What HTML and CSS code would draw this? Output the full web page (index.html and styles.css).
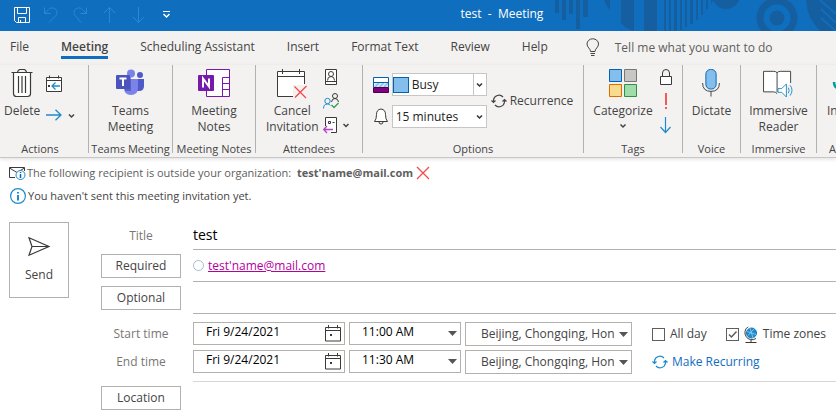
FILE: index.html
```html
<!DOCTYPE html>
<html lang="en">
<head>
    <meta charset="UTF-8">
    <meta name="viewport" content="width=device-width, initial-scale=1.0">
    <title>test - Meeting</title>
    <link rel="stylesheet" href="styles.css">
</head>
<body>
    <header class="titlebar">
        <div class="quick-access">
            <button class="icon-btn" aria-label="Save">
                <svg width="16" height="16" viewBox="0 0 16 16" fill="none" stroke="#fff"><path d="M.5.5h15v15h-13l-2-2zM3.500.5v6h9v-6M4.500 15.500v-5h7v5M6.500 13v2"/></svg>
            </button>
            <button class="icon-btn faded" aria-label="Undo">
                <svg width="16" height="16" viewBox="0 0 16 16" fill="none" stroke="#2b88d8"><path d="M1.500.5v6h6M1.500 6.500l4-4C8-.5 14 1 14 5.500c0 2-1 3-2 4l-6 6"/></svg>
            </button>
            <button class="icon-btn faded" aria-label="Redo">
                <svg width="16" height="16" viewBox="0 0 16 16" fill="none" stroke="#2b88d8"><path d="M14.500.5v6h-6M14.500 6.500l-4-4C8-.5 2 1 2 5.500c0 2 1 3 2 4l5 6"/></svg>
            </button>
            <button class="icon-btn faded" aria-label="Previous item">
                <svg width="16" height="16" viewBox="0 0 16 16" fill="none" stroke="#2b88d8"><path d="M8.500 16V.5M3 6l5.500-5.500L14 6"/></svg>
            </button>
            <button class="icon-btn faded" aria-label="Next item">
                <svg width="16" height="16" viewBox="0 0 16 16" fill="none" stroke="#2b88d8"><path d="M8.500 0v15.500M3 10l5.500 5.500L14 10"/></svg>
            </button>
            <button class="icon-btn" aria-label="Customize toolbar">
                <svg width="16" height="16" viewBox="0 0 16 16" fill="none" stroke="#fff"><path d="M4 4.500h7"/><path d="M4.500 7l3 3 3-3" stroke-width="1.500"/></svg>
            </button>
        </div>
        <svg class="pattern" width="281" height="31" viewBox="0 0 281 31" fill="#155fa0">
            <path d="M0 0h4v13H0zM7 0h4v20H7zM14 0h4v14h-4zM21 0h4v29h-4zM28 0h5v17h-5zM49 0h6v10q-4-4-6-10zM66 0h13v31q-8-2-13-8zM89 0h13v31H89zM109 0h2v31h-2zM114 0h2v31h-2zM119 0h3v31h-3zM125 0h2v30h-2zM130 0h2v27h-2zM135 0h3v24h-3zM141 0h2v20h-2zM146 0h2v15h-2zM151 0h2v9h-2zM156 0h3l-3 4z"/>
            <circle cx="171" cy="-5" r="14"/>
            <circle cx="222" cy="18" r="20.500"/>
            <circle cx="222" cy="18" r="13.500" fill="#106ebe"/>
            <circle cx="222" cy="18" r="7.500"/>
            <path d="M251 0h30v31h-16Q252 18 251 0z"/>
            <path d="M265 0l16 14M266 9l15 14M266 18l15 13" stroke="#106ebe" stroke-width="2" fill="none"/>
        </svg>
        <h1 class="window-title">test&nbsp; -&nbsp; Meeting</h1>
    </header>

    <nav class="tabs">
        <a class="tab" href="#">File</a>
        <a class="tab active" href="#">Meeting</a>
        <a class="tab" href="#">Scheduling Assistant</a>
        <a class="tab" href="#">Insert</a>
        <a class="tab" href="#">Format Text</a>
        <a class="tab" href="#">Review</a>
        <a class="tab" href="#">Help</a>
        <button class="tell-me">
            <svg width="14" height="18" viewBox="0 0 14 18" fill="none" stroke="#444"><path d="M4.500 12.500c0-3-3.500-4-3.500-7.500a5.500 5 0 0 1 11.500 0c0 3.500-3.500 4.500-3.500 7.500zM4.500 14.500H9M5 16.500h3.500"/></svg>
            Tell me what you want to do
        </button>
    </nav>

    <div class="ribbon">
        <section class="group actions">
            <div class="group-body">
                <button class="big-btn">
                    <svg width="28" height="28" viewBox="0 0 28 28" fill="none" stroke="#3b3a39" stroke-width="1.200"><path d="M5.500 3.500h17v21q0 3-3 3h-11q-3 0-3-3z" fill="#fff"/><path d="M3.500 3.500h21M9.500 3.500Q10 .5 12 .5h4q2 0 2.500 3M10.500 7v17M14 7v17M17.500 7v17"/></svg>
                    <span>Delete</span>
                </button>
                <div class="stack">
                    <button class="icon-btn" aria-label="Calendar">
                        <svg width="16" height="18" viewBox="0 0 16 18" fill="none" stroke="#3b3a39"><path d="M.5 2.500h15v14H.5z" fill="#fff"/><path d="M.5 5.500h15M3.500.5v3M12.500.5v3"/><path d="M2 10h2v2H2z" fill="#3b3a39" stroke="none"/><path d="M14 11H6M9.500 7.500L6 11l3.500 3.500" stroke="#1e8bcd" stroke-width="1.300"/></svg>
                    </button>
                    <button class="icon-btn" aria-label="Forward">
                        <svg width="28" height="12" viewBox="0 0 28 12" fill="none" stroke="#1e8bcd" stroke-width="1.300"><path d="M0 6h15M9.500.7L15 6l-5.500 5.300"/><path d="M23 5.500l2.500 2.500L28 5.500" stroke="#444" stroke-width="1.500"/></svg>
                    </button>
                </div>
            </div>
            <h2>Actions</h2>
        </section>

        <section class="group teams">
            <div class="group-body">
                <button class="big-btn">
                    <svg width="28" height="28" viewBox="0 0 28 28"><circle cx="15" cy="4.500" r="4" fill="#7b83eb"/><circle cx="24" cy="6" r="3" fill="#5059c9"/><path d="M20 10h8v7q0 5-5 5h-3z" fill="#5059c9"/><path d="M8 10h14v9q0 7-7 7t-7-7z" fill="#7b83eb"/><path d="M9 8h6v14H9z" fill="#3940a0" opacity=".5"/><rect y="6" width="14" height="14" rx="1" fill="#4b53bc"/><path d="M3.500 9.500h7M7 9.500V17" stroke="#fff" stroke-width="2"/></svg>
                    <span>Teams<br>Meeting</span>
                </button>
            </div>
            <h2>Teams Meeting</h2>
        </section>

        <section class="group notes">
            <div class="group-body">
                <button class="big-btn">
                    <svg width="32" height="28" viewBox="0 0 32 28" fill="none" stroke="#7719aa"><path d="M8.500.5h23v27h-23z" fill="#fff"/><path d="M24.500 27.500v-19h7M24.500 14.500h7M24.500 20.500h7"/><rect y="6" width="16" height="16" rx="1" fill="#7719aa" stroke="none"/><path d="M5 18.500v-9l6 8v-8" stroke="#fff" stroke-width="2"/></svg>
                    <span>Meeting<br>Notes</span>
                </button>
            </div>
            <h2>Meeting Notes</h2>
        </section>

        <section class="group attendees">
            <div class="group-body">
                <button class="big-btn">
                    <svg width="30" height="28" viewBox="0 0 30 28" fill="none" stroke="#3b3a39"><path d="M.5 2.500h27v25H.5z" fill="#fff" stroke="none"/><path d="M27.500 15V2.500H.5v25H16M.5 7.500h27M5.500 0v5M22.500 0v5"/><path d="M16 16h14v12H16z" fill="#f3f2f1" stroke="none"/><path d="M17.500 17.500L29 29M29.500 17L18 28.500" stroke="#f04a4a" stroke-width="1.300"/></svg>
                    <span>Cancel<br>Invitation</span>
                </button>
                <div class="stack">
                    <button class="icon-btn" aria-label="Address book">
                        <svg width="16" height="16" viewBox="0 0 16 16" fill="none" stroke="#3b3a39"><path d="M2.500.5h11v15h-11z" fill="#fff"/><path d="M2.500 12.500h11"/><circle cx="8" cy="5" r="2.500"/><path d="M4.500 11.500q0-4 3.500-4t3.500 4"/></svg>
                    </button>
                    <button class="icon-btn" aria-label="Check names">
                        <svg width="16" height="16" viewBox="0 0 16 16" fill="none" stroke="#3b3a39"><circle cx="12" cy="3" r="2.500"/><path d="M8.500 9q.5-3.500 3.500-3.500t3.500 3.500"/><circle cx="4.500" cy="8" r="2.700" stroke="#1e8bcd"/><path d="M.5 15.500q0-4.500 4-4.500 2 0 3 1.500" stroke="#1e8bcd"/><path d="M8.500 12l2.500 2.500 4.500-4.500" stroke="#30a04c" stroke-width="1.300"/></svg>
                    </button>
                    <button class="icon-btn" aria-label="Response options">
                        <svg width="27" height="16" viewBox="0 0 27 16" fill="none" stroke="#3b3a39"><path d="M2.500 9V.5h11v15H8" fill="#fff"/><path d="M5.500 4.500h2v2h-2zM9.500 5.500h2"/><path d="M10 12.500H.8M4 9l-3.300 3.500L4 16" stroke="#b146c2" stroke-width="1.300"/><path d="M20.500 7l2.500 2.500L25.500 7" stroke="#444" stroke-width="1.500"/></svg>
                    </button>
                </div>
            </div>
            <h2>Attendees</h2>
        </section>

        <section class="group options">
            <div class="group-body">
                <div class="option-fields">
                    <div class="option-row">
                        <svg width="16" height="16" viewBox="0 0 16 16"><path d="M.5.5h15v10H.5z" fill="#fff"/><path d="M1 6h14v4H1z" fill="#d5e9f8"/><path d="M2 10l4-4M6.500 10l4-4M11 10l4-4" stroke="#83beec" stroke-width="1.500"/><path d="M.5 10V.5h15V10M0 5.500h16" fill="none" stroke="#0063b1"/><path d="M.5 10.500h15v5H.5z" fill="#800080" stroke="#4b004b"/></svg>
                        <div class="combo">
                            <span class="busy-swatch"></span>
                            <select class="ribbon-select split" aria-label="Show as"><option>Busy</option></select>
                        </div>
                    </div>
                    <div class="option-row">
                        <svg width="16" height="17" viewBox="0 0 16 17" fill="none" stroke="#3b3a39"><path d="M1.500 13.500q2-2 2-7 0-5 4.500-5.500 4.500.5 4.500 5.500 0 5 2 7z" fill="#fff"/><path d="M6 14q0 2 2 2t2-2"/></svg>
                        <div class="combo">
                            <select class="ribbon-select" aria-label="Reminder"><option>15 minutes</option></select>
                        </div>
                    </div>
                </div>
                <button class="inline-btn">
                    <svg width="16" height="14" viewBox="0 0 16 14" fill="none" stroke="#444" stroke-width="1.200"><path d="M2.500 8V6a5.500 5.500 0 0 1 9.500-3M13.500 6v2A5.500 5.500 0 0 1 4 11M.5 6.500l2 2 2-2M11.500 7.500l2-2 2 2"/></svg>
                    Recurrence
                </button>
            </div>
            <h2>Options</h2>
        </section>

        <section class="group tags">
            <div class="group-body">
                <button class="big-btn">
                    <svg width="28" height="28" viewBox="0 0 28 28"><path d="M.5.5h12v12H.5z" fill="#83beec" stroke="#0063b1"/><path d="M15.500.5h12v12h-12z" fill="#c8c6c4" stroke="#797775"/><path d="M.5 15.500h12v12H.5z" fill="#f8db8f" stroke="#e06c00"/><path d="M15.500 15.500h12v12h-12z" fill="#a1ddaa" stroke="#2f8f46"/></svg>
                    <span>Categorize</span>
                    <svg class="caret" width="6" height="4" viewBox="0 0 6 4" fill="none" stroke="#444" stroke-width="1.500"><path d="M.5.5L3 3 5.500.5"/></svg>
                </button>
                <div class="stack">
                    <button class="icon-btn" aria-label="Private">
                        <svg width="14" height="16" viewBox="0 0 14 16" fill="none" stroke="#3b3a39"><path d="M1.500 7.500h11v8h-11z" fill="#fff"/><path d="M3.500 7.500V4Q3.500.5 7 .5T10.500 4v3.500"/></svg>
                    </button>
                    <button class="icon-btn" aria-label="High importance">
                        <svg width="14" height="16" viewBox="0 0 14 16" fill="#f05a5a"><path d="M6 0h2v12H6zM6 14h2v2H6z"/></svg>
                    </button>
                    <button class="icon-btn" aria-label="Low importance">
                        <svg width="14" height="16" viewBox="0 0 14 16" fill="none" stroke="#1e8bcd" stroke-width="1.200"><path d="M6.500 0v15.500M1.500 10l5 5.500 5-5.500"/></svg>
                    </button>
                </div>
            </div>
            <h2>Tags</h2>
        </section>

        <section class="group voice">
            <div class="group-body">
                <button class="big-btn">
                    <svg width="20" height="30" viewBox="0 0 20 30" fill="none" stroke="#3b3a39"><rect x="4.500" y=".5" width="11" height="21" rx="5" fill="#83beec" stroke="#0063b1"/><path d="M1 15q0 9 9 9t9-9M10 24v5.500"/></svg>
                    <span>Dictate</span>
                </button>
            </div>
            <h2>Voice</h2>
        </section>

        <section class="group immersive">
            <div class="group-body">
                <button class="big-btn">
                    <svg width="32" height="30" viewBox="0 0 32 30" fill="none" stroke="#3b3a39"><path d="M29.500 15V2.500H19q-3 0-4 1.500-1-1.500-4-1.500H.5v22H11q3 0 4 2z" fill="#fff" stroke="none"/><path d="M29.500 15V2.500H19q-3 0-4 1.500-1-1.500-4-1.500H.5v22H11q3 0 4 2M15 4v21"/><path d="M16 21h4l5-5v14l-5-5h-4z" fill="#fff" stroke="#1e8bcd"/><path d="M27 20q2 3 0 6M29 17.500q4 5 0 11" stroke="#1e8bcd"/></svg>
                    <span>Immersive<br>Reader</span>
                </button>
            </div>
            <h2>Immersive</h2>
        </section>

        <section class="group more">
            <div class="group-body">
                <button class="big-btn">
                    <svg width="10" height="28" viewBox="0 0 10 28" fill="none" stroke="#0099a8" stroke-width="2.500"><path d="M7 13q0 6 6 7 8-1 12-12"/></svg>
                    <span>In</span>
                </button>
            </div>
            <h2>A</h2>
        </section>
    </div>

    <main class="page">
        <div class="info-bar external">
            <svg width="17" height="16" viewBox="0 0 17 16" fill="none" stroke="#3b3a39"><path d="M6 12.500H.5v-10h15V6M.5 3L8 7.500 15.500 3"/><circle cx="11.500" cy="10" r="4.500" fill="#fff" stroke="#1e8bcd"/><path d="M11.500 7v1M11.500 9v4" stroke="#0063b1" stroke-width="1.500"/></svg>
            <span>The following recipient is outside your organization:&nbsp; <b>test'name@mail.com</b></span>
            <button class="icon-btn" aria-label="Remove recipient">
                <svg width="12" height="12" viewBox="0 0 12 12" fill="none" stroke="#f04a4a" stroke-width="1.300"><path d="M0 0l12 12M12 0L0 12"/></svg>
            </button>
        </div>
        <div class="info-bar">
            <svg width="18" height="16" viewBox="0 0 18 16" fill="none" stroke="#1e8bcd"><circle cx="9" cy="8" r="7.400" stroke-width="1.200"/><path d="M9 4v1.500M9 7v5.500" stroke-width="2"/></svg>
            <span>You haven't sent this meeting invitation yet.</span>
        </div>

        <form class="compose">
            <button type="button" class="send">
                <svg width="22" height="19" viewBox="0 0 22 19" fill="none" stroke="#3b3a39" stroke-width="1.200"><path d="M1 .8l20 8.700L1 18.200l3-8.700zM4 9.500h17"/></svg>
                Send
            </button>
            <div class="fields">
                <div class="row title-row">
                    <label for="title">Title</label>
                    <input id="title" class="line-input title-input" type="text" value="test">
                </div>
                <div class="row">
                    <button type="button" class="field-btn">Required</button>
                    <div class="recipients">
                        <span class="presence"></span>
                        <a href="#">test'name@mail.com</a>
                    </div>
                </div>
                <div class="row">
                    <button type="button" class="field-btn">Optional</button>
                    <input class="line-input" type="text" aria-label="Optional">
                </div>
                <div class="times">
                    <div class="row">
                        <label for="start-date">Start time</label>
                        <div class="time-fields">
                            <div class="date-box">
                                <input id="start-date" type="text" value="Fri 9/24/2021">
                                <button type="button" class="icon-btn" aria-label="Pick start date">
                                    <svg width="16" height="17" viewBox="0 0 16 17" fill="none" stroke="#3b3a39"><path d="M.5 2.500h15v13.500H.5zM.5 5.500h15M3.500 0v3.500M12.500 0v3.500"/><path d="M5 9h2v2H5z" fill="#3b3a39" stroke="none"/></svg>
                                </button>
                            </div>
                            <select class="form-select" aria-label="Start hour"><option>11:00 AM</option></select>
                            <select class="form-select zone" aria-label="Start time zone"><option>Beijing, Chongqing, Hon</option></select>
                            <div class="extras">
                                <label class="check"><input type="checkbox">All day</label>
                                <label class="check">
                                    <input type="checkbox" checked>
                                    <svg width="14" height="17" viewBox="0 0 14 17" fill="none" stroke="#3b3a39"><circle cx="7.500" cy="7" r="5" fill="#1e8bcd" stroke="#1479b8"/><path d="M3 5.500l9 3M4 9.500L10 3M6 2l3 10" stroke="#a8d8f2" stroke-width=".7"/><path d="M4 .8A6.500 6.500 0 1 0 12 12.500M7 14v2M1.500 16.500h11"/></svg>
                                    Time zones
                                </label>
                            </div>
                        </div>
                    </div>
                    <div class="row">
                        <label for="end-date">End time</label>
                        <div class="time-fields">
                            <div class="date-box">
                                <input id="end-date" type="text" value="Fri 9/24/2021">
                                <button type="button" class="icon-btn" aria-label="Pick end date">
                                    <svg width="16" height="17" viewBox="0 0 16 17" fill="none" stroke="#3b3a39"><path d="M.5 2.500h15v13.500H.5zM.5 5.500h15M3.500 0v3.500M12.500 0v3.500"/><path d="M5 9h2v2H5z" fill="#3b3a39" stroke="none"/></svg>
                                </button>
                            </div>
                            <select class="form-select" aria-label="End hour"><option>11:30 AM</option></select>
                            <select class="form-select zone" aria-label="End time zone"><option>Beijing, Chongqing, Hon</option></select>
                            <div class="extras">
                                <button type="button" class="recurring">
                                    <svg width="16" height="14" viewBox="0 0 16 14" fill="none" stroke="#1e8bcd" stroke-width="1.200"><path d="M2.500 8V6a5.500 5.500 0 0 1 9.500-3M13.500 6v2A5.500 5.500 0 0 1 4 11M.5 6.500l2 2 2-2M11.500 7.500l2-2 2 2"/></svg>
                                    Make Recurring
                                </button>
                            </div>
                        </div>
                    </div>
                </div>
                <div class="row location-row">
                    <button type="button" class="field-btn">Location</button>
                    <input class="line-input" type="text" aria-label="Location">
                </div>
            </div>
        </form>
    </main>
</body>
</html>
```
FILE: styles.css
```css
* {
    box-sizing: border-box;
}
body {
    margin: 0;
    font-family: "Open Sans", "Noto Sans", sans-serif;
    font-size: 12px;
    line-height: 16px;
    color: #444;
    background-color: #fff;
    overflow: hidden;
}
button, input, select {
    font: inherit;
    color: inherit;
    margin: 0;
}
button {
    border: none;
    background: none;
    padding: 0;
    cursor: pointer;
}
svg {
    display: block;
    flex: none;
    overflow: visible;
}
.icon-btn {
    display: block;
}

/* title bar */
.titlebar {
    position: relative;
    height: 31px;
    display: flex;
    align-items: center;
    justify-content: center;
    background-color: #106ebe;
    color: #fff;
    overflow: hidden;
}
.quick-access {
    position: absolute;
    left: 14px;
    top: 7px;
    display: flex;
    gap: 13px;
}
.pattern {
    position: absolute;
    right: 0;
    top: 0;
    overflow: hidden;
}
.window-title {
    margin: 0;
    padding: 0 0 3px 168px;
    font-size: 12px;
    font-weight: normal;
}

/* tabs */
.tabs {
    display: flex;
    align-items: flex-start;
    gap: 32px;
    height: 34px;
    padding: 8px 10px 0;
    background-color: #f3f2f1;
    white-space: nowrap;
}
.tab {
    color: #444;
    text-decoration: none;
    height: 20px;
}
.tab.active {
    font-weight: 600;
    border-bottom: 3px solid #106ebe;
}
.tell-me {
    display: flex;
    align-items: center;
    gap: 15px;
    margin-left: 6px;
    color: #605e5c;
}

/* ribbon */
.ribbon {
    display: flex;
    height: 93px;
    background-color: #f3f2f1;
    border-bottom: 1px solid #c8c6c4;
    box-shadow: 0 1px 4px #ddd;
    overflow: hidden;
    white-space: nowrap;
}
.group {
    flex: none;
    display: flex;
    flex-direction: column;
    justify-content: space-between;
    height: 88px;
    border-right: 1px solid #b3b0ad;
}
.group h2 {
    margin: 0;
    font-size: 11px;
    line-height: 16px;
    font-weight: normal;
    text-align: center;
    height: 12px;
}
.group-body {
    display: flex;
    justify-content: center;
    gap: 6px;
    padding-top: 4px;
}
.actions {
    width: 89px;
    padding-right: 8px;
}
.teams { width: 84px; }
.notes { width: 83px; }
.attendees { width: 107px; }
.options { width: 221px; }
.tags { width: 99px; }
.voice { width: 58px; }
.immersive { width: 76px; }
.more {
    border-right: none;
    padding-left: 10px;
}
.big-btn {
    display: flex;
    flex-direction: column;
    align-items: center;
    height: 64px;
}
.big-btn > svg:first-child {
    height: 28px;
}
.big-btn span {
    margin-top: 6px;
}
.caret {
    margin-top: 5px;
}
.stack {
    display: flex;
    flex-direction: column;
    gap: 8px;
}
.actions .group-body {
    justify-content: flex-start;
    padding-left: 4px;
}
.actions .stack {
    padding-top: 6px;
    gap: 16px;
}
.attendees .group-body {
    justify-content: flex-start;
    gap: 4px;
    padding-left: 10px;
}
.options .group-body {
    align-items: center;
    gap: 4px;
}
.option-fields {
    display: flex;
    flex-direction: column;
    gap: 9px;
    padding-top: 4px;
}
.option-row {
    display: flex;
    align-items: center;
    gap: 3px;
}
.combo {
    display: flex;
    align-items: center;
    width: 95px;
    height: 23px;
    background-color: #fff;
    border: 1px solid #c8c6c4;
    color: #222;
}
.busy-swatch {
    flex: none;
    width: 16px;
    height: 16px;
    background-color: #83beec;
    border: 1px solid #0063b1;
}
.ribbon-select {
    appearance: none;
    flex: 1;
    min-width: 0;
    height: 21px;
    padding: 0 16px 0 3px;
    border: none;
    background: url("data:image/svg+xml,%3Csvg xmlns='http://www.w3.org/2000/svg' width='13' height='21'%3E%3Cpath d='M4 9.500l2.500 2.500L9 9.500' fill='none' stroke='%23333' stroke-width='1.500'/%3E%3C/svg%3E") no-repeat right center;
}
.ribbon-select.split {
    background-image: url("data:image/svg+xml,%3Csvg xmlns='http://www.w3.org/2000/svg' width='13' height='21'%3E%3Cpath d='M.5 0v21' stroke='%23c8c6c4'/%3E%3Cpath d='M4 9.500l2.500 2.500L9 9.500' fill='none' stroke='%23333' stroke-width='1.500'/%3E%3C/svg%3E");
}
.inline-btn {
    display: flex;
    align-items: center;
    gap: 3px;
    padding-top: 4px;
}

/* info bars */
.page {
    padding: 3px 0 0 9px;
}
.info-bar {
    display: flex;
    align-items: center;
    height: 23px;
    font-size: 11px;
}
.info-bar > svg {
    margin-right: 1px;
}
.info-bar .icon-btn {
    margin-left: 4px;
}
.external {
    color: #605e5c;
}

/* meeting form */
.compose {
    display: flex;
    align-items: flex-start;
    gap: 32px;
    padding-top: 15px;
}
.send {
    flex: none;
    display: flex;
    flex-direction: column;
    align-items: center;
    justify-content: center;
    gap: 11px;
    width: 60px;
    height: 76px;
    border: 1px solid #b3b0ad;
}
.fields {
    flex: 1;
    min-width: 0;
}
.row {
    display: flex;
    align-items: center;
    gap: 12px;
    height: 32px;
}
.row > label {
    flex: none;
    width: 80px;
    text-align: center;
    color: #797775;
}
.field-btn {
    flex: none;
    width: 80px;
    height: 24px;
    border: 1px solid #b3b0ad;
}
.title-row {
    height: 28px;
}
.line-input, .recipients {
    flex: 1;
    min-width: 0;
    height: 100%;
    padding: 0;
    border: none;
    border-bottom: 1px solid #b3b0ad;
    outline: none;
}
.title-input {
    padding-bottom: 2px;
    font-size: 14px;
    color: #000;
}
.recipients {
    display: flex;
    align-items: center;
    gap: 4px;
}
.recipients a {
    color: #b4009e;
}
.presence {
    width: 11px;
    height: 11px;
    border: 1px solid #a8c0cc;
    border-radius: 50%;
}
.times {
    display: flex;
    flex-direction: column;
    gap: 4px;
    padding: 8px 0 7px;
}
.times .row {
    height: 24px;
}
.time-fields {
    flex: 1;
    display: flex;
    align-items: flex-start;
    gap: 4px;
    white-space: nowrap;
}
.date-box {
    display: flex;
    align-items: center;
    width: 152px;
    height: 23px;
    padding: 0 3px 0 12px;
    border: 1px solid #b3b0ad;
}
.date-box input {
    flex: 1;
    min-width: 0;
    padding: 0 0 3px;
    border: none;
    outline: none;
    color: #000;
}
.form-select {
    appearance: none;
    width: 112px;
    height: 23px;
    padding: 0 16px 3px 12px;
    border: 1px solid #b3b0ad;
    border-radius: 0;
    color: #000;
    background: #fff url("data:image/svg+xml,%3Csvg xmlns='http://www.w3.org/2000/svg' width='9' height='5'%3E%3Cpath d='M0 0h9L4.500 5z' fill='%23555'/%3E%3C/svg%3E") no-repeat right 3px center;
}
.form-select.zone {
    width: 167px;
    height: 24px;
    padding: 0 16px 0 15px;
    color: #444;
}
.extras {
    display: flex;
    align-items: center;
    align-self: center;
    gap: 19px;
    padding-left: 16px;
}
.check {
    display: flex;
    align-items: center;
    gap: 5px;
}
.check input {
    appearance: none;
    width: 13px;
    height: 13px;
    border: 1px solid #605e5c;
    background-color: #fff;
}
.check input:checked {
    background-image: url("data:image/svg+xml,%3Csvg xmlns='http://www.w3.org/2000/svg' width='11' height='11'%3E%3Cpath d='M2 5.500l2.500 2.500L9.500 2.500' fill='none' stroke='%23605e5c' stroke-width='1.500'/%3E%3C/svg%3E");
}
.recurring {
    display: flex;
    align-items: center;
    gap: 4px;
    color: #106ebe;
}
.location-row {
    align-items: flex-start;
}
.location-row .field-btn {
    margin-top: 5px;
}
.location-row .line-input {
    border-bottom: none;
    border-top: 1px solid #d8d6d4;
}
```
